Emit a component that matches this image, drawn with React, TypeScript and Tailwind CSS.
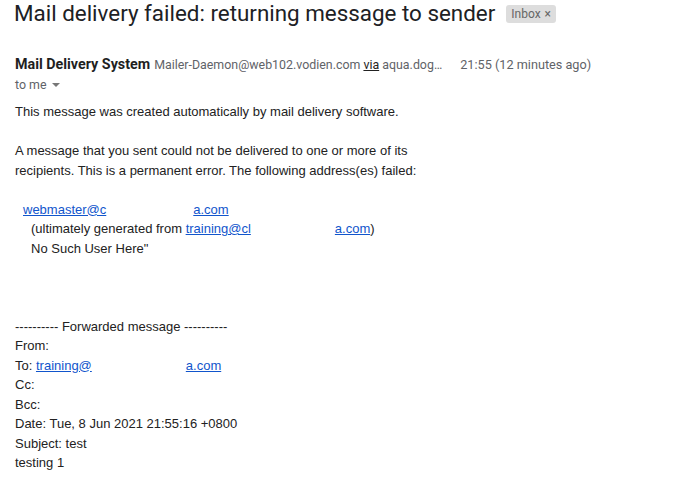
import React from 'react'

const Gap: React.FC<{ w: number }> = ({ w }) => (
  <span className="inline-block" style={{ width: w }} />
)

const Link: React.FC<{ children: React.ReactNode }> = ({ children }) => (
  <a href="#" className="text-[#1155cc] underline">
    {children}
  </a>
)

const App: React.FC = () => {
  return (
    <div className="h-[477px] w-[681px] overflow-hidden bg-white text-[#222]">
      <div className="flex items-center pl-[14px] pt-0">
        <h1 className="font-['Roboto',sans-serif] text-[22.4px] leading-[26px] font-normal text-[#202124]">
          Mail delivery failed: returning message to sender
        </h1>
        <span className="ml-[11px] mt-[1px] rounded-[3px] bg-[#dddddd] px-[5px] font-['Roboto',sans-serif] text-[12px] leading-[18px] text-[#666]">
          Inbox <span className="ml-[1px]">×</span>
        </span>
      </div>

      <div className="mt-[29px] pl-[15px] font-['Roboto',sans-serif]">
        <div className="flex h-[20px] items-center">
          <span className="text-[14.3px] font-bold text-[#1f1f1f]">Mail Delivery System</span>
          <span className="ml-[4px] text-[12.4px] text-[#5f6368]">
            Mailer-Daemon@web102.vodien.com <span className="underline text-[#222]">via</span> aqua.dog…
          </span>
          <span className="ml-[18px] text-[12.7px] text-[#5f6368]">21:55 (12 minutes ago)</span>
        </div>
        <div className="flex h-[20px] items-center text-[12.4px] text-[#5f6368]">
          to me
          <svg width="10" height="10" viewBox="0 0 10 10" className="ml-[4px]">
            <path d="M1 3 L9 3 L5 7 Z" fill="#777" />
          </svg>
        </div>
      </div>

      <div className="mt-[7px] pl-[15px] font-['Liberation_Sans',Arial,sans-serif] text-[13px] leading-[19.5px] text-[#222]">
        <div>This message was created automatically by mail delivery software.</div>
        <div>&nbsp;</div>
        <div>A message that you sent could not be delivered to one or more of its</div>
        <div>recipients. This is a permanent error. The following address(es) failed:</div>
        <div>&nbsp;</div>
        <div className="pl-[8px]">
          <Link>webmaster@c</Link>
          <Gap w={87} />
          <Link>a.com</Link>
        </div>
        <div className="pl-[16px]">
          (ultimately generated from <Link>training@cl</Link>
          <Gap w={84} />
          <Link>a.com</Link>)
        </div>
        <div className="pl-[16px]">No Such User Here"</div>
        <div>&nbsp;</div>
        <div>&nbsp;</div>
        <div>&nbsp;</div>
        <div>---------- Forwarded message ----------</div>
        <div>From:</div>
        <div>
          To: <Link>training@</Link>
          <Gap w={94} />
          <Link>a.com</Link>
        </div>
        <div>Cc:</div>
        <div>Bcc:</div>
        <div>Date: Tue, 8 Jun 2021 21:55:16 +0800</div>
        <div>Subject: test</div>
        <div>testing 1</div>
      </div>
    </div>
  )
}

export default App
